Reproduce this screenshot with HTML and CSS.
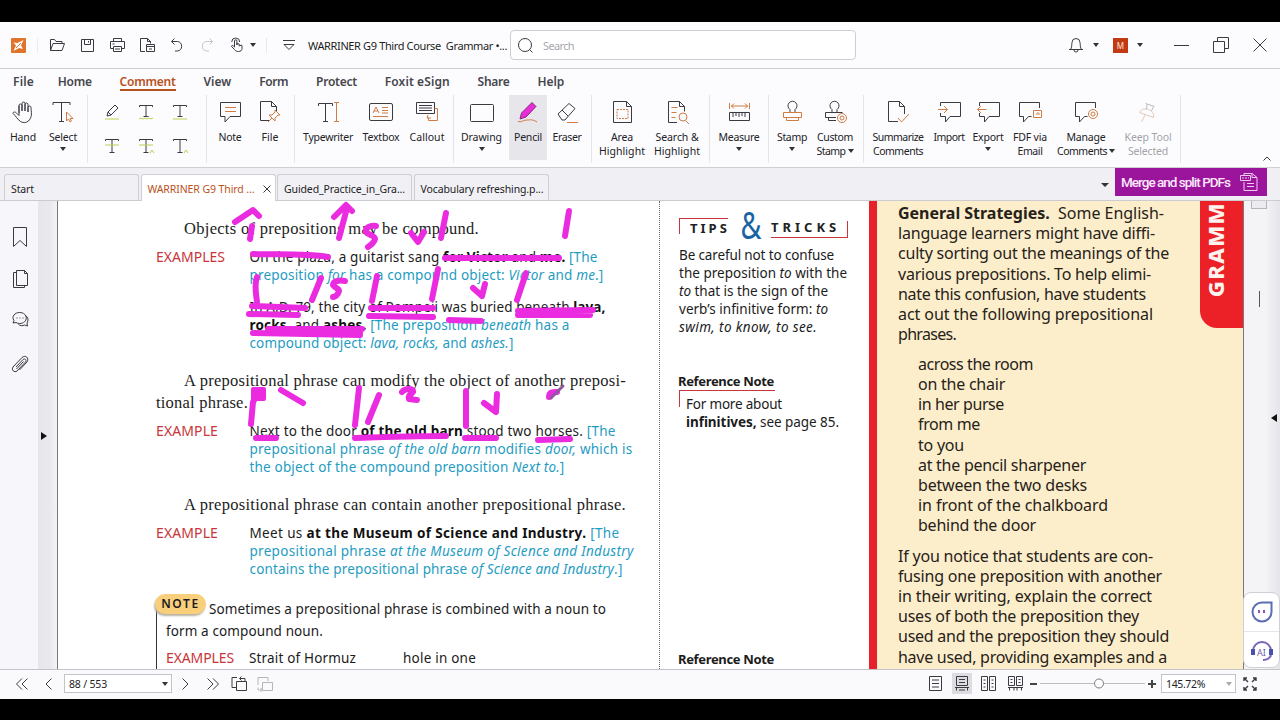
FILE: index.html
```html
<!DOCTYPE html>
<html lang="en">
<head>
    <meta charset="UTF-8">
    <meta name="viewport" content="width=device-width, initial-scale=1.0">
    <title>WARRINER G9 Third Course Grammar</title>
    <link rel="stylesheet" href="styles.css">
</head>
<body>
    <div class="app">
        <header class="titlebar">
            <span class="logo"><svg width="15" height="15" viewBox="0 0 15 15"><rect width="15" height="15" rx="1" fill="#e0742b"/><path d="M2.500 4.500l4 .5 6-3-2.500 5.500 2 3.500-4-1-5.500 3 2.500-5.500z" fill="#fff"/><path d="M5 10l5-5" stroke="#e0742b"/></svg></span>
            <span class="tb"><svg width="17" height="16" viewBox="0 0 17 16"><path d="M1.500 13.500V2.500h4l1.500 2h6v2M1.500 13.500l2.500-7h11.500l-2.500 7z"/></svg></span>
            <span class="tb"><svg width="15" height="15" viewBox="0 0 15 15"><path d="M1.500 1.500h12v12h-12zM4.500 1.500v5h6v-5M8.500 3v1.500"/></svg></span>
            <span class="tb"><svg width="17" height="16" viewBox="0 0 17 16"><path d="M4.500 4.500v-3h8v3M4.500 11.500h-3v-7h14v7h-3M4.500 9.500h8v5h-8zM6 12h5M3.500 7h2"/></svg></span>
            <span class="tb"><svg width="17" height="16" viewBox="0 0 17 16"><path d="M6 14.500H1.500v-13h7l3 3v2M8.500 1.500v3h3M7.500 7.500h8v7h-8zM7.500 9.500h8M10 12h3"/></svg></span>
            <span class="tb"><svg width="16" height="16" viewBox="0 0 16 16"><path d="M5.500 1.500l-3 3 3 3M2.500 4.500h6a4.800 4.800 0 0 1 0 9.500H6"/></svg></span>
            <span class="tb faded"><svg width="16" height="16" viewBox="0 0 16 16"><path d="M10.500 1.500l3 3-3 3M13.500 4.500h-6a4.800 4.800 0 0 0 0 9.500H10"/></svg></span>
            <span class="tb"><svg width="16" height="16" viewBox="0 0 16 16"><path d="M5.500 10V4a1.200 1.200 0 0 1 2.400 0v4M7.900 8V6.500l2.300.6V9l2.300-1 .5 1v2.500c0 2-1.500 3-3.500 3s-3-.5-4-2L2.500 9.500c0-1.500 1.500-1.200 3 .5M2.700 5a4 4 0 0 1 8 0"/></svg></span>
            <i class="caret tap-caret"></i>
            <i class="split"></i>
            <span class="more"><svg width="12" height="11" viewBox="0 0 12 11"><path d="M0 .5h12M1 4.500h10l-5 5z"/></svg></span>
            <span class="filename" data-w="199">WARRINER G9 Third Course&nbsp; Grammar •...</span>
            <div class="search">
                <svg width="17" height="17" viewBox="0 0 17 17"><circle cx="8" cy="8" r="6.500"/><path d="M12.500 12.500l3 3"/></svg>
                <span data-w="31">Search</span>
            </div>
            <div class="window-tools">
                <svg width="16" height="16" viewBox="0 0 16 16"><path d="M1 12.500h14M2.500 12.500c1.500-2 1-4 1.500-7a4 4 0 0 1 8 0c.5 3 0 5 1.500 7M6 13a2 2 0 0 0 4 0"/></svg>
                <i class="caret"></i>
                <b class="avatar">M</b>
                <i class="caret"></i>
                <svg class="win-min" width="15" height="15" viewBox="0 0 15 15"><path d="M0 7.500h15"/></svg>
                <svg class="win-max" width="16" height="16" viewBox="0 0 16 16"><path d="M.5 4.500h11v11H.5zM4.500 4.500v-4h11v11h-4"/></svg>
                <svg class="win-close" width="14" height="14" viewBox="0 0 14 14"><path d="M.5.500l13 13M13.500.500l-13 13"/></svg>
            </div>
        </header>

        <nav class="menu">
            <span class="file" data-w="21">File</span>
            <span data-w="34">Home</span>
            <span class="current" data-w="56">Comment</span>
            <span data-w="28">View</span>
            <span data-w="29">Form</span>
            <span data-w="41">Protect</span>
            <span data-w="65">Foxit eSign</span>
            <span data-w="32">Share</span>
            <span data-w="27">Help</span>
        </nav>

        <div class="ribbon">
            <div class="group g-hand">
                <div class="tool w46"><svg width="24" height="24" viewBox="0 0 24 24"><path d="M8 13V5.500a1.500 1.500 0 0 1 3 0V11 3.500a1.500 1.500 0 0 1 3 0V11 4.500a1.500 1.500 0 0 1 3 0V12 7.500a1.500 1.500 0 0 1 3 0C20 12 22 16 17.500 21c-2 2-6 2-8 .5C7 20 4.500 15.500 2 13.500c0-2 2.500-2 4 0l2 2V5.500"/></svg><span data-w="26">Hand</span></div>
                <div class="tool w34"><svg width="24" height="24" viewBox="0 0 24 24"><path d="M2 5V2.500h17V5M10.500 2.500v19M8 21.500h5"/><path class="o" d="M15.500 12v9l2-2 1.500 3 1.500-1-1.500-2.500h3z"/></svg><span data-w="28">Select</span><i class="caret"></i></div>
            </div>
            <div class="group g-marks">
                <svg width="20" height="20" viewBox="0 0 20 20"><path d="M5 14l1-4 7-7 3 3-7 7zM6 10l3 3"/><path class="y" d="M3 17h14"/></svg>
                <svg width="20" height="20" viewBox="0 0 20 20"><path d="M3.500 5V3.500h13V5M10 3.500v11M7.500 14.500h5"/><path class="y" d="M3 17l2-1 2 1 2-1 2 1 2-1 2 1 2-1"/></svg>
                <svg width="20" height="20" viewBox="0 0 20 20"><path d="M3.500 5V3.500h13V5M10 3.500v11M7.500 14.500h5"/><path class="y" d="M3 17h14"/></svg>
                <svg width="20" height="20" viewBox="0 0 20 20"><path d="M3.500 5V3.500h13V5M10 3.500v13M7.500 16.500h5"/><path class="y" d="M3 9h14"/></svg>
                <svg width="20" height="20" viewBox="0 0 20 20"><path d="M3.500 5V3.500h13V5M10 3.500v13M7.500 16.500h5"/><path class="y" d="M3 9h14M14 17l2-3 2 3"/></svg>
                <svg width="20" height="20" viewBox="0 0 20 20"><path d="M3.500 5V3.500h13V5M10 3.500v13M7.500 16.500h5"/><path class="y" d="M14 17l2-3 2 3"/></svg>
            </div>
            <div class="group g-note">
                <div class="tool w46"><svg width="24" height="24" viewBox="0 0 24 24"><path d="M2.500 2.500h20v14H12L7 22v-5.500H2.500z"/><path class="o" d="M7 7.500h11M7 11.500h11"/></svg><span data-w="23">Note</span></div>
                <div class="tool w34"><svg width="24" height="24" viewBox="0 0 24 24"><path d="M11 20.500H2.500V1.500h11l5 5V11M13.500 1.500v5h5"/><path class="o" d="M17 10l5 5-2 0-3 3 0 3-3-3-4 4 4-4-3-3h3l3-3z"/></svg><span data-w="17">File</span></div>
            </div>
            <div class="group g-text">
                <div class="tool w66"><svg width="24" height="24" viewBox="0 0 24 24"><path d="M2.500 6V3.500h14V6M9.500 3.500v18M7 21.500h5"/><path class="o" d="M20.500 2.500v19M18 2.500h5M18 21.500h5"/></svg><span data-w="50">Typewriter</span></div>
                <div class="tool w40"><svg width="24" height="24" viewBox="0 0 24 24"><rect x=".5" y="3.500" width="23" height="17" rx="1.500"/><path class="o" d="M4 13l3-6 3 6M5 11h4M13 7.500h6M13 10.500h6M13 13h6M4 16.500h15"/></svg><span data-w="37">Textbox</span></div>
                <div class="tool w52"><svg width="24" height="24" viewBox="0 0 24 24"><path d="M1.500 2.500h18v11h-18zM4 5.500h13M4 8h13M4 10.500h13"/><path class="o" d="M19.500 8.500h3v12h-9v-3M13 15l-1 3 4 0"/></svg><span data-w="35">Callout</span></div>
            </div>
            <div class="group g-draw">
                <div class="tool w55"><svg width="24" height="24" viewBox="0 0 24 24"><rect x=".5" y="4.500" width="23" height="17" rx="1"/></svg><span data-w="41">Drawing</span><i class="caret"></i></div>
                <div class="tool w38 picked"><svg width="24" height="24" viewBox="0 0 24 24"><path d="M5.500 13L16 2.500l4 4L10 17l-6 2z" fill="#e62dd6" stroke="#8a2a86"/><path class="o" d="M2 21.500c4 1 5-1.500 9-1.500s5-1 10 2"/></svg><span data-w="28">Pencil</span></div>
                <div class="tool w40"><svg width="24" height="24" viewBox="0 0 24 24"><path d="M3 14L14 3.500l6 5L10 20H7zM7 10l6 6"/><path class="o" d="M12 22.500h11"/></svg><span data-w="29">Eraser</span></div>
            </div>
            <div class="group g-highlight">
                <div class="tool w60"><svg width="24" height="24" viewBox="0 0 24 24"><path d="M3.500 1.500h13l5 5v16h-18zM16.500 1.500v5h5"/><path class="o dash" d="M7 9.500h11v9H7z"/></svg><span data-w="22">Area</span><span data-w="46">Highlight</span></div>
                <div class="tool w50"><svg width="24" height="24" viewBox="0 0 24 24"><path d="M12 22.500H3.500v-21h11l5 5v5M14.500 1.500v5h5"/><path class="o" d="M6.500 7.500h6M6.500 12.500h5M6.500 17.500h4M21 21l3 3"/><circle class="o" cx="18" cy="17" r="4"/></svg><span data-w="43">Search &amp;</span><span data-w="46">Highlight</span></div>
            </div>
            <div class="group g-measure">
                <div class="tool w58"><svg width="24" height="24" viewBox="0 0 24 24"><path d="M2.500 12.500h20v8h-20zM6 13v4M9 13v3M12 13v4M15 13v3M18 13v4"/><path class="o" d="M2.500 3v6M22.500 3v6M4 6h17M7 3.500L4.500 6 7 8.500M18 3.500L20.500 6 18 8.500"/></svg><span data-w="41">Measure</span><i class="caret"></i></div>
            </div>
            <div class="group g-stamp">
                <div class="tool w46"><svg width="24" height="24" viewBox="0 0 24 24"><path d="M10 12V9.500a4.500 4.500 0 1 1 5 0V12"/><path class="o" d="M3.500 12.500h18v5h-18zM6.500 17.500v3h12v-3"/></svg><span data-w="30">Stamp</span><i class="caret"></i></div>
                <div class="tool w40"><svg width="24" height="24" viewBox="0 0 24 24"><path d="M9 12V9.500a4.500 4.500 0 1 1 5 0V12M13 17.500H2.500v-5h17M5.500 17.500v3H13"/><circle class="o" cx="19" cy="18" r="4.500"/><circle class="o" cx="19" cy="18" r="2"/></svg><span data-w="36">Custom</span><span class="with-caret"><span data-w="29">Stamp</span><i class="caret"></i></span></div>
            </div>
            <div class="group g-manage">
                <div class="tool w68"><svg width="24" height="24" viewBox="0 0 24 24"><path d="M12 21.500H2.500v-20h11l5 5V14M13.500 1.500v5h5"/><path class="o" d="M12 18l3.500 4L23 14"/></svg><span data-w="51">Summarize</span><span data-w="50">Comments</span></div>
                <div class="tool w34"><svg width="24" height="24" viewBox="0 0 24 24"><path d="M3.500 6V2.500h20v14H13L8.500 22v-5.500h-5V13"/><path class="o" d="M1 9.500h9M7 6l3.500 3.500L7 13"/></svg><span data-w="31">Import</span></div>
                <div class="tool w44"><svg width="24" height="24" viewBox="0 0 24 24"><path d="M3.500 6V2.500h20v14H13L8.500 22v-5.500h-5V13"/><path class="o" d="M1.500 9.500h9M5 6L1.500 9.500 5 13"/></svg><span data-w="31">Export</span><i class="caret"></i></div>
                <div class="tool w40"><svg width="24" height="24" viewBox="0 0 24 24"><path d="M21.500 8V2.500h-20v14h4V22l5-5.500h3"/><path class="o" d="M15.500 10.500h8v7h-8zM18 14h4M20 12v1"/></svg><span data-w="34">FDF via</span><span data-w="25">Email</span></div>
                <div class="tool w72"><svg width="24" height="24" viewBox="0 0 24 24"><path d="M21.500 8V2.500h-20v14h4V22l5-5.500h3"/><circle class="o" cx="19" cy="14" r="4.500"/><circle class="o" cx="19" cy="14" r="2"/></svg><span data-w="39">Manage</span><span class="with-caret"><span data-w="50">Comments</span><i class="caret"></i></span></div>
                <div class="tool w52 disabled"><svg width="24" height="24" viewBox="0 0 24 24"><path d="M9.500 3.500l9 3M11 4.500l-.5 5M17.500 6.500l-2 4.500"/><path class="o" d="M3.500 12.500c2-4 6-4 9-3s6 4 5 8zM9 15l-3.500 7"/></svg><span data-w="47">Keep Tool</span><span data-w="40">Selected</span></div>
            </div>
            <svg class="collapse" width="8" height="5" viewBox="0 0 8 5"><path d="M.5 4.500L4 1l3.500 3.500"/></svg>
        </div>

        <div class="doc-tabs">
            <div class="doc-tab"><span data-w="23">Start</span></div>
            <div class="doc-tab open"><span data-w="107">WARRINER G9 Third ...</span><svg width="8" height="8" viewBox="0 0 8 8"><path d="M.5.500l7 7M7.500.500l-7 7"/></svg></div>
            <div class="doc-tab"><span data-w="121">Guided_Practice_in_Gra...</span></div>
            <div class="doc-tab"><span data-w="123">Vocabulary refreshing.p...</span></div>
            <i class="caret tabs-caret"></i>
            <div class="merge"><span data-w="109">Merge and split PDFs</span><svg width="20" height="20" viewBox="0 0 20 20"><path d="M5 3V1.500h8l5 4v13H5V10M1.500 3.500h10v5h-10zM8 11.500h7M8 14.500h7M13 1.500v4h5"/><path d="M3 6h7" stroke-dasharray="2 1"/></svg></div>
        </div>

        <main class="workspace">
            <aside class="side">
                <svg width="18" height="22" viewBox="0 0 18 22"><path d="M2.500 1.500h13v19L9 14.500l-6.500 6z"/></svg>
                <svg width="18" height="20" viewBox="0 0 18 20"><path d="M5.500 1.500h8l3 3v12h-11zM13.500 1.500v3h3M5.500 3.500h-3v15h11v-2"/></svg>
                <svg width="18" height="18" viewBox="0 0 18 18"><path d="M8.500 1.500c9 0 9 11 0 11-1.500 0-2.500-.5-3.500-1l-3 .5 1-2.500c-3-4 1-8 5.500-8zM14.500 4.500c3 2 3 5 1.500 7.500l.5 3-3-1c-2 1-4 1-6-.5M5.500 7h1M8.500 7h1M11.500 7h1"/></svg>
                <svg width="18" height="20" viewBox="0 0 18 20"><path d="M5 12l7-7.500c2-1.500 4 .5 2.500 2.500l-8.500 9c-2.500 2-6-1-4-4L11 2.500c3.500-3 7.500.5 5 4.500l-7.500 8M12.500 6.500L5.500 14"/></svg>
            </aside>
            <div class="gutter"><i class="open-side"></i></div>

            <article class="page">
                <section class="lesson">
                    <p class="serif indent"><span data-w="295">Objects of prepositions may be compound.</span></p>
                    <div class="example gap10">
                        <h4><span data-w="69">EXAMPLES</span></h4>
                        <div>
                            <p><span data-w="348">On the plaza, a guitarist sang <b>for Victor</b> and <b>me.</b> <em class="gloss">[The</em></span></p>
                            <p class="gloss"><span data-w="354">preposition <i>for</i> has a compound object: <i>Victor</i> and <i>me</i>.]</span></p>
                            <p class="gap14"><span data-w="356">In A.D. 79, the city of Pompeii was buried beneath <b>lava,</b></span></p>
                            <p><span data-w="320"><b>rocks,</b> and <b>ashes.</b> <em class="gloss">[The preposition <i>beneath</i> has a</em></span></p>
                            <p class="gloss"><span data-w="264">compound object: <i>lava, rocks,</i> and <i>ashes.</i>]</span></p>
                        </div>
                    </div>
                    <p class="serif indent gap20"><span data-w="442">A prepositional phrase can modify the object of another preposi-</span></p>
                    <p class="serif gap4"><span data-w="92">tional phrase.</span></p>
                    <div class="example gap10">
                        <h4><span data-w="62">EXAMPLE</span></h4>
                        <div>
                            <p><span data-w="366">Next to the door <b>of the old barn</b> stood two horses. <em class="gloss">[The</em></span></p>
                            <p class="gloss"><span data-w="383">prepositional phrase <i>of the old barn</i> modifies <i>door,</i> which is</span></p>
                            <p class="gloss"><span data-w="315">the object of the compound preposition <i>Next to.</i>]</span></p>
                        </div>
                    </div>
                    <p class="serif indent gap20"><span data-w="442">A prepositional phrase can contain another prepositional phrase.</span></p>
                    <div class="example gap10">
                        <h4><span data-w="62">EXAMPLE</span></h4>
                        <div>
                            <p><span data-w="370">Meet us <b>at the Museum of Science and Industry.</b> <em class="gloss">[The</em></span></p>
                            <p class="gloss"><span data-w="384">prepositional phrase <i>at the Museum of Science and Industry</i></span></p>
                            <p class="gloss"><span data-w="373">contains the prepositional phrase <i>of Science and Industry</i>.]</span></p>
                        </div>
                    </div>
                    <div class="note">
                        <strong class="note-label">NOTE</strong>
                        <p class="note-first"><span data-w="397">Sometimes a prepositional phrase is combined with a noun to</span></p>
                        <p class="gap4"><span data-w="157">form a compound noun.</span></p>
                        <div class="note-example">
                            <h4><span data-w="68">EXAMPLES</span></h4>
                            <div class="note-term"><span data-w="107">Strait of Hormuz</span></div>
                            <div><span data-w="73">hole in one</span></div>
                        </div>
                    </div>
                </section>

                <section class="margin-notes">
                    <div class="tips">
                        <b class="tips-left">TIPS</b><span class="amp">&amp;</span><b class="tips-right">TRICKS</b>
                    </div>
                    <div class="tips-text">
                        <p><span data-w="155">Be careful not to confuse</span></p>
                        <p><span data-w="168">the preposition <i>to</i> with the</span></p>
                        <p><span data-w="149"><i>to</i> that is the sign of the</span></p>
                        <p><span data-w="149">verb’s infinitive form: <i>to</i></span></p>
                        <p><span data-w="138"><i>swim, to know, to see.</i></span></p>
                    </div>
                    <h5><span data-w="96">Reference Note</span></h5>
                    <div class="reference">
                        <p><span data-w="96">For more about</span></p>
                        <p><span data-w="153"><b>infinitives,</b> see page 85.</span></p>
                    </div>
                    <h5><span data-w="96">Reference Note</span></h5>
                </section>

                <section class="teacher">
                    <p><span data-w="266"><b>General Strategies.</b>&nbsp; Some English-</span></p>
                    <p><span data-w="257">language learners might have diffi-</span></p>
                    <p><span data-w="271">culty sorting out the meanings of the</span></p>
                    <p><span data-w="253">various prepositions. To help elimi-</span></p>
                    <p><span data-w="248">nate this confusion, have students</span></p>
                    <p><span data-w="255">act out the following prepositional</span></p>
                    <p><span data-w="58">phrases.</span></p>
                    <ul>
                        <li><span data-w="115">across the room</span></li>
                        <li><span data-w="87">on the chair</span></li>
                        <li><span data-w="86">in her purse</span></li>
                        <li><span data-w="62">from me</span></li>
                        <li><span data-w="46">to you</span></li>
                        <li><span data-w="168">at the pencil sharpener</span></li>
                        <li><span data-w="169">between the two desks</span></li>
                        <li><span data-w="190">in front of the chalkboard</span></li>
                        <li><span data-w="118">behind the door</span></li>
                    </ul>
                    <p><span data-w="255">If you notice that students are con-</span></p>
                    <p><span data-w="264">fusing one preposition with another</span></p>
                    <p><span data-w="254">in their writing, explain the correct</span></p>
                    <p><span data-w="241">uses of both the preposition they</span></p>
                    <p><span data-w="271">used and the preposition they should</span></p>
                    <p><span data-w="269">have used, providing examples and a</span></p>
                    <div class="thumb-tab"><b>GRAMM</b></div>
                </section>

                <!-- pencil marks drawn over the page -->
                <svg class="ink" viewBox="58 201 1185 468">
                    <path d="M235 222L253 210l6 6M252 226l-2 13M334 217l12-12 6 6M347 208l-8 30"/>
                    <path d="M376 226c-6-1-11 2-10 6 2 3 9 3 9 7-1 4-4 6-7 8M411 233l7 9 6-10M446 213l-5 25M569 211l-4 25"/>
                    <path d="M253 254c25 1 50-1 75 3M445 258l114 0"/>
                    <path d="M257 277c-3 8-1 16 0 25M321 278l-9 22M345 281c-6-1-12 0-12 4 3 4 6 3 6 6-1 4-4 6-6 6"/>
                    <path d="M377 276l-5 25M438 269l-6 30M473 288l9 8 3-12M526 273l-9 27"/>
                    <path d="M252 306l53 2M249 314l49 1M371 308h62M369 316l64 1M449 320l32 1M518 311l75-1M518 315l72 0"/>
                    <path d="M268 329l94 0M253 333l107 2M320 331l40 2"/>
                    <path d="M258 394l-5 8-2 22M281 390l22 13M359 388l-4 37M379 395l-11 27M402 392c3-4 12-4 11 0-3 3-5 4-4 7l8 1M466 391v35M484 403l12 9 1-18"/>
                    <path d="M253 389h11v10h-11z" class="blot"/>
                    <path d="M256 438l20 0M355 438c30-1 60-2 91-2M465 438l31 0M538 440l32-1"/>
                    <path d="M549 397c0-5 4-5 8-5"/>
                    <path d="M551 398l12-12" class="nib"/>
                </svg>
            </article>

            <div class="scroller">
                <i class="thumb"></i><i class="tick"></i><i class="open-right"></i>
                <div class="assistant">
                    <div><svg width="22" height="22" viewBox="0 0 22 22"><path d="M11 1.500h9.500V11A9.500 9.500 0 1 1 11 1.500z" stroke="#5b6fb4"/><path d="M8 9v3M13 9v3" stroke="#8b54b5"/></svg></div>
                    <div><svg width="24" height="24" viewBox="0 0 24 24"><path d="M3 12a9 9 0 0 1 18 0M21 15c0 4-4 6-8 6" stroke="#7a63b8"/><path d="M3 10v6M21 10v6" stroke="#4a50ae" stroke-width="4"/><text x="7" y="17">AI</text></svg></div>
                </div>
            </div>
        </main>

        <footer class="status">
            <svg class="nav n1" width="12" height="12" viewBox="0 0 12 12"><path d="M6 .5L.5 6 6 11.500M11.500.500L6 6l5.500 5.500"/></svg>
            <svg class="nav n2" width="7" height="12" viewBox="0 0 7 12"><path d="M6.500.500L1 6l5.500 5.500"/></svg>
            <div class="page-box"><span data-w="38">88 / 553</span><i class="caret"></i></div>
            <svg class="nav n3" width="7" height="12" viewBox="0 0 7 12"><path d="M.5.500L6 6 .5 11.500"/></svg>
            <svg class="nav n4" width="12" height="12" viewBox="0 0 12 12"><path d="M.5.500L6 6 .5 11.500M6 .5L11.500 6 6 11.500"/></svg>
            <svg class="nav n5" width="16" height="16" viewBox="0 0 16 16"><path d="M5.500 5.500h10v9h-10zM5 11.500H1v-10h5M14 5V2.500H8.500M10.500.500l-2 2 2 2"/></svg>
            <svg class="nav n6" width="16" height="16" viewBox="0 0 16 16"><path d="M5.500 6.500h10v8h-10zM1 9V1.500h10V5M1 11.500V14h4M3.500 12l2 2-2 2"/></svg>
            <div class="views">
                <svg width="14" height="15" viewBox="0 0 14 15"><path d="M.500.500h12v14H.500zM3 4h7M3 7.500h7M3 11h7"/></svg>
                <svg class="on" width="14" height="15" viewBox="0 0 14 15"><path d="M1.500.500h11v9h-11zM4 3.500h6M4 6.500h6M0 11.500h14M1.500 14.500v-3M12.500 14.500v-3M4 14h6"/></svg>
                <svg width="15" height="15" viewBox="0 0 15 15"><path d="M.500.500h6v14h-6zM8.500.500h6v14h-6zM2.500 4h2M2.500 7.500h2M2.500 11h2M10.500 4h2M10.500 7.500h2M10.500 11h2"/></svg>
                <svg width="15" height="15" viewBox="0 0 15 15"><path d="M.500.500h6v9h-6zM8.500.500h6v9h-6zM2.500 3.500h2M2.500 6.500h2M10.500 3.500h2M10.500 6.500h2M0 11.500h15M1.500 14.500v-3M6 14.500v-3M9 14.500v-3M13.500 14.500v-3"/></svg>
            </div>
            <div class="zoom"><i class="minus"></i><div class="track"><i></i></div><i class="plus"></i></div>
            <div class="zoom-box"><span data-w="39">145.72%</span><i class="caret"></i></div>
            <svg class="full" width="14" height="14" viewBox="0 0 14 14"><path d="M5 5L1 1M1 4V1h3M9 5l4-4M10 1h3v3M5 9l-4 4M1 10v3h3M9 9l4 4M10 13h3v-3"/></svg>
        </footer>
    </div>

    <script>
        document.querySelectorAll('[data-w]').forEach(line => {
            const target = Number(line.dataset.w);
            const natural = line.getBoundingClientRect().width;
            line.style.letterSpacing = (target - natural) / line.textContent.length + 'px';
        });
    </script>
</body>
</html>
```
FILE: styles.css
```css
* {
    box-sizing: border-box;
}
body {
    margin: 0;
    background: #000;
    font-family: 'Noto Sans', 'Open Sans', sans-serif;
    font-size: 11px;
    color: #222226;
}
p, h4, h5, ul {
    margin: 0;
    padding: 0;
    list-style: none;
}
svg {
    display: block;
    flex: none;
    fill: none;
    stroke: #3a3a42;
    stroke-width: 1;
}
[data-w] {
    display: inline-block;
    width: max-content;
    white-space: nowrap;
}
.app {
    height: 720px;
    padding: 22px 0 21px;
    display: flex;
    flex-direction: column;
    overflow: hidden;
}
.caret {
    flex: none;
    border: 3px solid transparent;
    border-top: 4px solid #333;
    border-bottom: 0;
}

/* Title bar */
.titlebar {
    height: 47px;
    flex: none;
    display: flex;
    align-items: center;
    background: #fcfcfe;
    border-bottom: 1px solid #cfcfd4;
}
.logo {
    width: 38px;
    height: 15px;
    padding-left: 11px;
    border-right: 1px solid #ececf0;
    margin-right: 4px;
}
.logo svg {
    stroke: none;
}
.tb {
    width: 30px;
    display: flex;
    justify-content: center;
}
.faded svg {
    stroke: #c4c4c8;
}
.tap-caret {
    margin-left: -2px;
}
.split {
    width: 1px;
    height: 15px;
    margin-left: 10px;
    background: #e8e8ec;
}
.more {
    margin: 0 13px 0 16px;
}
.filename {
    flex: none;
    color: #1e1e22;
}
.search {
    width: 346px;
    height: 30px;
    border: 1px solid #cdcdd2;
    border-radius: 4px;
    background: #fff;
    display: flex;
    align-items: center;
    padding-left: 6px;
    gap: 9px;
    color: #a8a8ae;
    margin-left: auto;
}
.window-tools {
    width: 424px;
    padding-left: 212px;
    display: flex;
    align-items: center;
}
.window-tools .caret {
    margin: 0 14px 0 9px;
}
.avatar {
    width: 15px;
    height: 15px;
    background: #c23a14;
    color: #ffe6d6;
    font-size: 8px;
    font-weight: 400;
    line-height: 15px;
    text-align: center;
}
.win-min {
    margin-left: 17px;
}
.win-max {
    margin-left: 24px;
}
.win-close {
    margin-left: 24px;
}

/* Menu */
.menu {
    height: 26px;
    flex: none;
    display: flex;
    gap: 27.8px;
    padding: 3px 0 0 13px;
    background: #fcfcfe;
    font-size: 12px;
    font-weight: 600;
    line-height: 19px;
    color: #46464c;
}
.menu .file {
    margin-right: -4px;
}
.menu span {
    height: 19px;
}
.menu .current {
    color: #b9511d;
    border-bottom: 2px solid #b9511d;
}

/* Ribbon */
.ribbon {
    height: 73px;
    flex: none;
    display: flex;
    position: relative;
    background: #fcfcfe;
    border-bottom: 1px solid #cfcfd4;
    font-size: 10.5px;
    line-height: 14px;
}
.group {
    flex: none;
    height: 68px;
    display: flex;
    border-right: 1px solid #e4e4e9;
}
.g-hand { width: 88px; }
.g-note { width: 88px; }
.g-text { width: 159px; }
.g-draw { width: 138px; }
.g-highlight { width: 118px; }
.g-measure { width: 59px; }
.g-stamp { width: 95px; }
.g-manage { width: 317px; }
.g-marks {
    width: 119px;
    padding: 7px 0 0 7px;
    display: grid;
    grid-template-columns: 34px 34px 34px;
    grid-auto-rows: 34px;
    justify-items: center;
}
.tool {
    flex: none;
    display: flex;
    flex-direction: column;
    align-items: center;
    padding-top: 5px;
}
.tool > svg {
    margin-bottom: 6px;
}
.w34 { width: 34px; }
.w38 { width: 38px; }
.w40 { width: 40px; }
.w44 { width: 44px; }
.w46 { width: 46px; }
.w50 { width: 50px; }
.w52 { width: 52px; }
.w55 { width: 55px; }
.w58 { width: 58px; }
.w60 { width: 60px; }
.w66 { width: 66px; }
.w68 { width: 68px; }
.w72 { width: 72px; }
.ribbon .o {
    stroke: #cf7c45;
}
.ribbon .y {
    stroke: #bcd24f;
}
.dash {
    stroke-dasharray: 2 1;
}
.picked {
    background: #e6e6eb;
    height: 65px;
}
.disabled {
    color: #a3a3a8;
}
.disabled svg {
    stroke: #bbb;
}
.disabled .o {
    stroke: #dfc9bb;
}
.tool > .caret {
    margin-top: 3px;
}
.with-caret {
    display: flex;
    align-items: center;
    gap: 2px;
}
.collapse {
    position: absolute;
    right: 9px;
    bottom: 6px;
}

/* Document tabs */
.doc-tabs {
    height: 33px;
    flex: none;
    display: flex;
    align-items: flex-end;
    gap: 1.5px;
    padding-left: 4px;
    background: #efeff4;
    border-bottom: 1px solid #cbcbd0;
}
.doc-tab {
    width: 135px;
    height: 26px;
    padding: 3px 0 0 6px;
    display: flex;
    align-items: center;
    background: #f1f1f5;
    border: 1px solid #cfcfd4;
    border-bottom: 0;
    border-radius: 3px 3px 0 0;
    font-size: 10.5px;
}
.doc-tab svg {
    margin-left: 8px;
}
.doc-tab.open {
    background: #fff;
    color: #b9511d;
    height: 27px;
    margin-bottom: -1px;
    padding-top: 1px;
}
.tabs-caret {
    margin: 0 5px 13px auto;
    border-width: 4px 4px 0;
}
.merge {
    width: 152px;
    height: 28px;
    align-self: flex-start;
    margin-right: 13px;
    padding-left: 6px;
    display: flex;
    align-items: center;
    gap: 9px;
    background: #9b149c;
    color: #fbe8fb;
    font-family: Roboto, sans-serif;
    font-weight: 500;
    font-size: 13.5px;
}
.merge svg {
    stroke: #f3c9f3;
}

/* Workspace */
.workspace {
    flex: 1;
    min-height: 0;
    display: flex;
}
.side {
    width: 38px;
    padding: 25px 0 0 11px;
    background: #f7f7fb;
}
.side svg:nth-child(2) { margin-top: 21px; }
.side svg:nth-child(3) { margin-top: 22px; }
.side svg:nth-child(4) { margin-top: 26px; }
.gutter {
    width: 20px;
    padding: 231px 0 0 3px;
    background: linear-gradient(90deg, #e7e7eb, #e9e9ed 60%, #f3f3f7);
    border-right: 1px solid #77777c;
}
.open-side, .open-right {
    display: block;
    width: 0;
    border: 4px solid transparent;
    border-left: 6px solid #111;
    border-right: 0;
}
.page {
    position: relative;
    flex: none;
    width: 1185px;
    display: flex;
    background: #fff;
    overflow: hidden;
    font-size: 13.5px;
    line-height: 18px;
    color: #1c1c1c;
}
.page p {
    height: 18px;
}
.lesson {
    width: 602px;
    padding: 19px 0 0 98px;
    border-right: 1px dotted #666;
}
.serif {
    font-family: 'Liberation Serif', serif;
    font-size: 16.5px;
}
.indent {
    padding-left: 28px;
}
.page .gap4 { margin-top: 4px; }
.page .gap10 { margin-top: 10px; }
.page .gap14 { margin-top: 14px; }
.page .gap20 { margin-top: 20px; }
.example {
    display: flex;
}
h4 {
    flex: none;
    width: 93.5px;
    font-size: 14px;
    font-weight: 400;
    color: #c8353a;
}
.gloss {
    color: #1f9cc2;
    font-style: normal;
}
.lesson b {
    color: #111;
}
.note {
    position: relative;
    height: 90px;
    margin-top: 22px;
    padding-left: 9px;
    border-left: 1px solid #333;
}
.note-first {
    padding-left: 43px;
}
.note-label {
    position: absolute;
    left: -2px;
    top: -6px;
    width: 51px;
    height: 20px;
    border-radius: 10px;
    background: #f9cf7c;
    box-shadow: -1px 2px 2px #b9b3a4;
    font-size: 12px;
    line-height: 20px;
    font-weight: 600;
    letter-spacing: 1.6px;
    text-align: center;
}
.note-example {
    display: flex;
    margin-top: 9px;
}
.note-example h4 {
    width: 83px;
}
.note-term {
    width: 154px;
}

.margin-notes {
    width: 209px;
    padding-left: 19px;
}
.tips {
    display: flex;
    align-items: flex-start;
    height: 45px;
    padding-top: 17px;
    width: 169px;
    color: #222;
}
.tips b {
    height: 20px;
    font-size: 13px;
    line-height: 19px;
    letter-spacing: 4px;
}
.tips .tips-left {
    width: 49px;
    padding-left: 11px;
    border-top: 1px solid #c8353a;
    background: linear-gradient(#c8353a, #c8353a) left top / 1px 15px no-repeat;
    letter-spacing: 3px;
}
.tips-right {
    width: 77px;
    margin-left: auto;
    border-bottom: 1px solid #c8353a;
    background: linear-gradient(#c8353a, #c8353a) right bottom / 1px 16px no-repeat;
}
.amp {
    width: 28px;
    height: 46px;
    margin: -17px 0 0 9px;
    font-size: 34px;
    line-height: 46px;
    text-align: center;
    transform: scale(.84, 1.12);
    color: #1763a4;
}
.tips-text {
    height: 126px;
}
h5 {
    height: 18px;
    font-size: 13px;
    margin-left: -1px;
}
.reference {
    width: 96px;
    padding: 4px 0 0 7px;
    border-top: 1px solid #c8353a;
    background: linear-gradient(#c8353a, #c8353a) left top / 1px 16px no-repeat;
}
.reference + h5 {
    margin-top: 219px;
}

.teacher {
    position: relative;
    flex: 1;
    padding: 2px 0 0 21px;
    background: #fdeecb;
    border-left: 8px solid #e62129;
    font-size: 16px;
    line-height: 20.2px;
    color: #26221a;
}
.teacher p {
    height: 20.2px;
}
.teacher ul {
    padding: 10px 0 11px 20px;
    line-height: 20.1px;
}
.teacher li {
    height: 20.05px;
}
.thumb-tab {
    position: absolute;
    top: 0;
    right: 0;
    width: 43px;
    height: 127px;
    border-radius: 0 0 0 17px;
    background: #ec2027;
    overflow: hidden;
}
.thumb-tab b {
    position: absolute;
    left: 0;
    bottom: 31px;
    writing-mode: vertical-rl;
    transform: rotate(180deg);
    font-size: 22px;
    line-height: 30px;
    font-weight: 800;
    letter-spacing: 1.4px;
    color: #fff3ee;
}
.ink {
    position: absolute;
    left: 0;
    top: 0;
    width: 1185px;
    height: 468px;
    stroke: #ea2be0;
    stroke-width: 6;
    stroke-linecap: round;
    stroke-linejoin: round;
}
.ink .blot {
    fill: #ea2be0;
    stroke-width: 4;
}
.ink .nib {
    stroke: #8d5aa0;
    stroke-width: 3;
}

.scroller {
    position: relative;
    flex: 1;
    background: linear-gradient(90deg, #f4f4f6 60%, #e4e4ea);
    border-left: 1px solid #77777c;
}
.thumb {
    position: absolute;
    left: 7px;
    top: 0;
    width: 16px;
    height: 8px;
    background: #ececf0;
    border: 1px solid #b5b5ba;
    border-top: 0;
}
.tick {
    position: absolute;
    left: 15px;
    top: 90px;
    width: 1px;
    height: 16px;
    background: #55555a;
}
.open-right {
    position: absolute;
    right: 3px;
    top: 213px;
    transform: rotate(180deg);
}
.assistant {
    position: absolute;
    right: 0;
    bottom: 1px;
    width: 37px;
    height: 76px;
    border: 1px solid #cfcfd6;
    border-radius: 8px;
    background: #fff;
}
.assistant div {
    height: 38px;
    display: flex;
    align-items: center;
    justify-content: center;
}
.assistant div + div {
    border-top: 1px solid #e6e6ec;
}
.assistant svg {
    stroke-width: 2;
}
.assistant text {
    fill: #6a5fb4;
    stroke: none;
    font-size: 9px;
}

/* Status bar */
.status {
    height: 30px;
    flex: none;
    display: flex;
    align-items: center;
    padding-bottom: 2px;
    background: #fafafd;
    border-top: 1px solid #c3c3c8;
}
.n1 { margin-left: 16px; }
.n2 { margin-left: 17px; }
.n3 { margin-left: 10px; }
.n4 { margin-left: 18px; }
.n5 { margin-left: 12px; }
.n6 { margin-left: 10px; stroke: #b5b5ba; }
.page-box, .zoom-box {
    height: 19px;
    border: 1px solid #c3c3c8;
    background: #fff;
    display: flex;
    align-items: center;
    justify-content: space-between;
    padding: 0 3px 0 4px;
    font-size: 10.5px;
}
.page-box {
    width: 108px;
    margin-left: 12px;
}
.views {
    margin-left: auto;
    display: flex;
    gap: 12px;
}
.views .on {
    background: #dcdce1;
    box-shadow: 0 0 0 3px #dcdce1;
}
.zoom {
    display: flex;
    align-items: center;
    margin-left: 7px;
    gap: 3px;
}
.minus {
    width: 7px;
    height: 2px;
    background: #444;
}
.plus {
    width: 8px;
    height: 8px;
    background: linear-gradient(#444, #444) center / 8px 2px no-repeat, linear-gradient(#444, #444) center / 2px 8px no-repeat;
}
.track {
    width: 105px;
    height: 1px;
    background: #bcbcc1;
}
.track i {
    display: block;
    width: 10px;
    height: 10px;
    margin-left: 54px;
    border: 1px solid #77777c;
    border-radius: 50%;
    background: #fff;
    transform: translateY(-4.5px);
}
.zoom-box {
    width: 75px;
    margin-left: 5px;
}
.zoom-box .caret {
    border-top-color: #aaa;
}
.full {
    margin: 0 23px 0 7px;
    stroke-width: 1.4;
}
```
